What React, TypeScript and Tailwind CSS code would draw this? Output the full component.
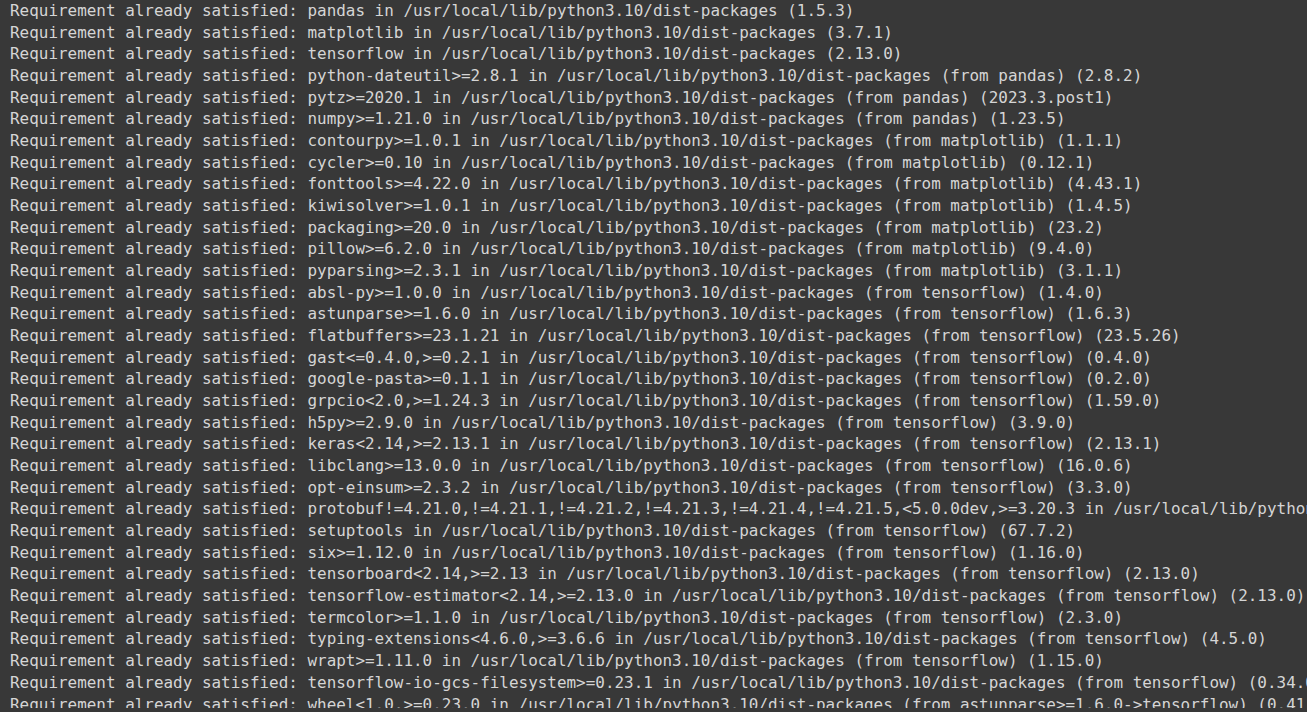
const lines = [
  "Requirement already satisfied: pandas in /usr/local/lib/python3.10/dist-packages (1.5.3)",
  "Requirement already satisfied: matplotlib in /usr/local/lib/python3.10/dist-packages (3.7.1)",
  "Requirement already satisfied: tensorflow in /usr/local/lib/python3.10/dist-packages (2.13.0)",
  "Requirement already satisfied: python-dateutil>=2.8.1 in /usr/local/lib/python3.10/dist-packages (from pandas) (2.8.2)",
  "Requirement already satisfied: pytz>=2020.1 in /usr/local/lib/python3.10/dist-packages (from pandas) (2023.3.post1)",
  "Requirement already satisfied: numpy>=1.21.0 in /usr/local/lib/python3.10/dist-packages (from pandas) (1.23.5)",
  "Requirement already satisfied: contourpy>=1.0.1 in /usr/local/lib/python3.10/dist-packages (from matplotlib) (1.1.1)",
  "Requirement already satisfied: cycler>=0.10 in /usr/local/lib/python3.10/dist-packages (from matplotlib) (0.12.1)",
  "Requirement already satisfied: fonttools>=4.22.0 in /usr/local/lib/python3.10/dist-packages (from matplotlib) (4.43.1)",
  "Requirement already satisfied: kiwisolver>=1.0.1 in /usr/local/lib/python3.10/dist-packages (from matplotlib) (1.4.5)",
  "Requirement already satisfied: packaging>=20.0 in /usr/local/lib/python3.10/dist-packages (from matplotlib) (23.2)",
  "Requirement already satisfied: pillow>=6.2.0 in /usr/local/lib/python3.10/dist-packages (from matplotlib) (9.4.0)",
  "Requirement already satisfied: pyparsing>=2.3.1 in /usr/local/lib/python3.10/dist-packages (from matplotlib) (3.1.1)",
  "Requirement already satisfied: absl-py>=1.0.0 in /usr/local/lib/python3.10/dist-packages (from tensorflow) (1.4.0)",
  "Requirement already satisfied: astunparse>=1.6.0 in /usr/local/lib/python3.10/dist-packages (from tensorflow) (1.6.3)",
  "Requirement already satisfied: flatbuffers>=23.1.21 in /usr/local/lib/python3.10/dist-packages (from tensorflow) (23.5.26)",
  "Requirement already satisfied: gast<=0.4.0,>=0.2.1 in /usr/local/lib/python3.10/dist-packages (from tensorflow) (0.4.0)",
  "Requirement already satisfied: google-pasta>=0.1.1 in /usr/local/lib/python3.10/dist-packages (from tensorflow) (0.2.0)",
  "Requirement already satisfied: grpcio<2.0,>=1.24.3 in /usr/local/lib/python3.10/dist-packages (from tensorflow) (1.59.0)",
  "Requirement already satisfied: h5py>=2.9.0 in /usr/local/lib/python3.10/dist-packages (from tensorflow) (3.9.0)",
  "Requirement already satisfied: keras<2.14,>=2.13.1 in /usr/local/lib/python3.10/dist-packages (from tensorflow) (2.13.1)",
  "Requirement already satisfied: libclang>=13.0.0 in /usr/local/lib/python3.10/dist-packages (from tensorflow) (16.0.6)",
  "Requirement already satisfied: opt-einsum>=2.3.2 in /usr/local/lib/python3.10/dist-packages (from tensorflow) (3.3.0)",
  "Requirement already satisfied: protobuf!=4.21.0,!=4.21.1,!=4.21.2,!=4.21.3,!=4.21.4,!=4.21.5,<5.0.0dev,>=3.20.3 in /usr/local/lib/python3.10/dist-packages (from tensorflow) (3.20.3)",
  "Requirement already satisfied: setuptools in /usr/local/lib/python3.10/dist-packages (from tensorflow) (67.7.2)",
  "Requirement already satisfied: six>=1.12.0 in /usr/local/lib/python3.10/dist-packages (from tensorflow) (1.16.0)",
  "Requirement already satisfied: tensorboard<2.14,>=2.13 in /usr/local/lib/python3.10/dist-packages (from tensorflow) (2.13.0)",
  "Requirement already satisfied: tensorflow-estimator<2.14,>=2.13.0 in /usr/local/lib/python3.10/dist-packages (from tensorflow) (2.13.0)",
  "Requirement already satisfied: termcolor>=1.1.0 in /usr/local/lib/python3.10/dist-packages (from tensorflow) (2.3.0)",
  "Requirement already satisfied: typing-extensions<4.6.0,>=3.6.6 in /usr/local/lib/python3.10/dist-packages (from tensorflow) (4.5.0)",
  "Requirement already satisfied: wrapt>=1.11.0 in /usr/local/lib/python3.10/dist-packages (from tensorflow) (1.15.0)",
  "Requirement already satisfied: tensorflow-io-gcs-filesystem>=0.23.1 in /usr/local/lib/python3.10/dist-packages (from tensorflow) (0.34.0)",
  "Requirement already satisfied: wheel<1.0,>=0.23.0 in /usr/local/lib/python3.10/dist-packages (from astunparse>=1.6.0->tensorflow) (0.41.2)",
];

export default function App() {
  return (
    <div className="w-[1307px] h-[712px] bg-[#383838] overflow-hidden">
      {/* output cell */}
      <div className="h-[708px] overflow-hidden pl-[10px]">
        <pre className="m-0 text-[15.95px] leading-[21.67px] text-[#d5d5d5] font-['DejaVu_Sans_Mono','Liberation_Mono',monospace] whitespace-pre">
          {lines.join("\n")}
        </pre>
      </div>
    </div>
  );
}
